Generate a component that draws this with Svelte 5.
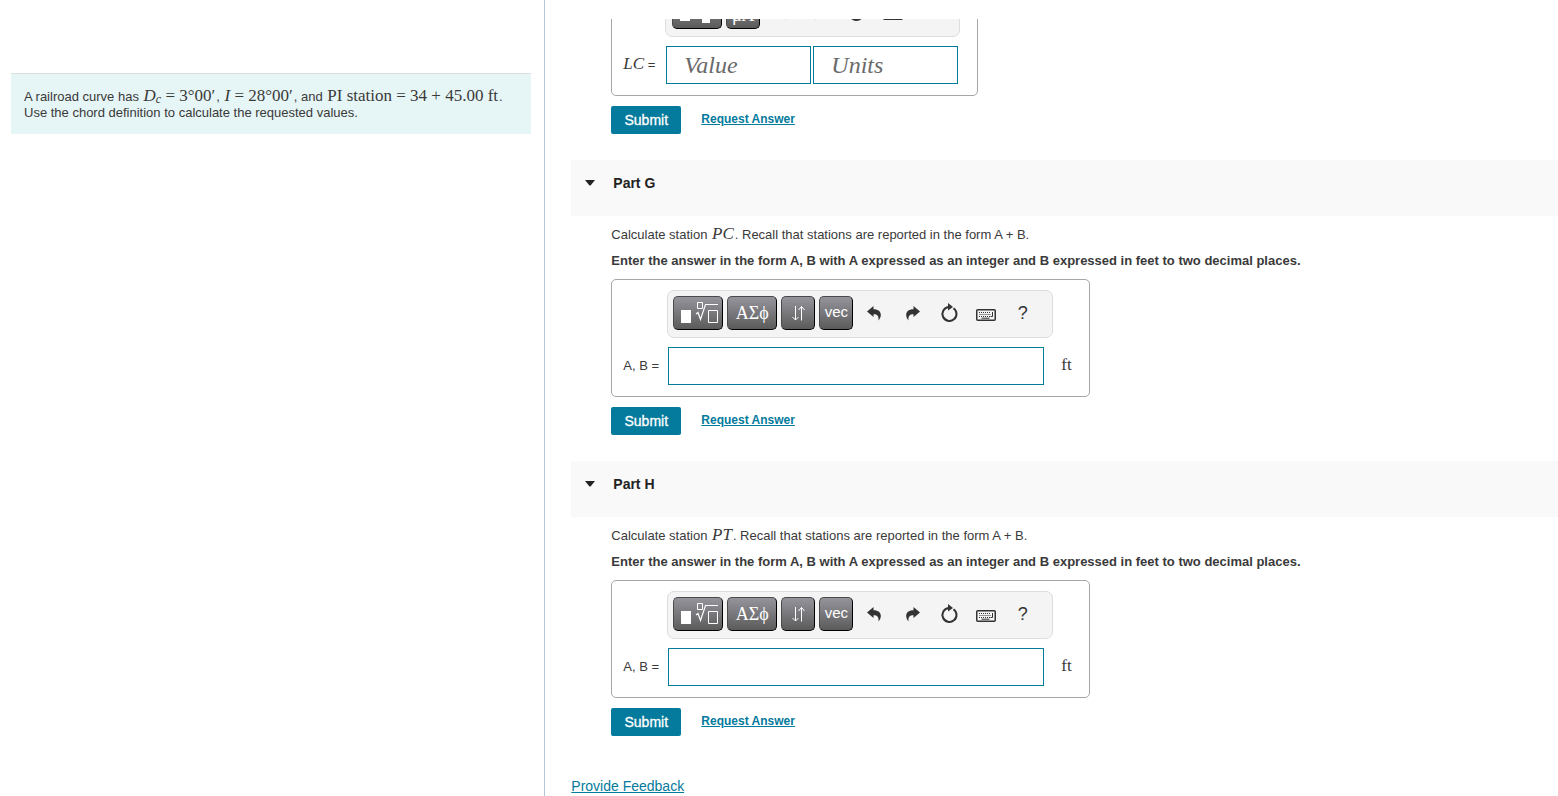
<script>
  const parts = [
    { letter: 'G', symbol: 'PC' },
    { letter: 'H', symbol: 'PT' }
  ];
</script>

{#snippet tools()}
  <div class="tools">
    <button class="tool" type="button" aria-label="undo">
      <svg width="16" height="18" viewBox="0 0 16 18"><path d="M0 7.500 6.500 2v3.200c5 0 7.300 2.300 7.300 5.800 0 2-1 4-2.300 5.500.5-4.500-1-6.300-5-6.300V13z" /></svg>
    </button>
    <button class="tool" type="button" aria-label="redo">
      <svg width="16" height="18" viewBox="0 0 16 18"><path d="M16 7.500 9.500 2v3.200C4.500 5.200 2.200 7.500 2.200 11c0 2 1 4 2.300 5.500-.5-4.500 1-6.300 5-6.300V13z" /></svg>
    </button>
    <button class="tool" type="button" aria-label="reset">
      <svg width="18" height="20" viewBox="0 0 18 20"><path class="line" d="M13.500 5.200A7 7 0 1 1 8.500 4" /><path d="M8 0l5 4-5 3.500z" /></svg>
    </button>
    <button class="tool" type="button" aria-label="keyboard shortcuts">
      <svg class="keys" width="20" height="12" viewBox="0 0 20 12"><rect class="frame" x=".75" y=".75" width="18.5" height="10.500" rx="1" /><path class="dots" d="M3 3.500h12M3.500 5.500h11M3 7.500h12" /><path class="bar" d="M5.500 9.200h8M16.500 3v4.500h-2" /></svg>
    </button>
    <button class="tool help" type="button" aria-label="help">?</button>
  </div>
{/snippet}

{#snippet actions()}
  <div class="actions">
    <button class="submit" type="button">Submit</button>
    <a class="request" href="#answer">Request Answer</a>
  </div>
{/snippet}

<div class="page">
  <aside>
    <div class="problem">
      A railroad curve has <span class="math"><i>D</i><sub>c</sub> = 3°00′</span>, <span class="math"><i>I</i> = 28°00′</span>, and <span class="math">PI station = 34 + 45.00 ft</span>.<br />
      Use the chord definition to calculate the requested values.
    </div>
  </aside>

  <main>
    <section class="body">
      <div class="window">
        <div class="card">
          <div class="toolbar indent">
            <button class="key wide" type="button" aria-label="templates">
              <svg width="32" height="24" viewBox="0 0 32 24"><path class="solid" d="M-1 8h10v13H-1zM21 12h8v11h-8zM21 2h8v7h-8z" /></svg>
            </button>
            <button class="key serif units" type="button">μÅ</button>
            {@render tools()}
          </div>
          <div class="entry">
            <label class="lc" for="value-f"><i>LC</i> =</label>
            <input id="value-f" class="half" placeholder="Value" />
            <input class="half" placeholder="Units" aria-label="Units" />
          </div>
        </div>
      </div>
      {@render actions()}
    </section>

    {#each parts as part}
      <section>
        <h2><svg width="10" height="6" viewBox="0 0 10 6"><path d="M0 0h10L5.500 5.600h-1z" /></svg>Part {part.letter}</h2>
        <div class="body">
          <p>Calculate station <i class="math">{part.symbol}</i>. Recall that stations are reported in the form A + B.</p>
          <p class="strong">Enter the answer in the form A, B with A expressed as an integer and B expressed in feet to two decimal places.</p>
          <div class="card">
            <div class="toolbar">
              <button class="key wide" type="button" aria-label="templates">
                <svg width="40" height="26" viewBox="0 0 40 26"><path class="solid" d="M3 10h10v13H3z" /><path class="thin" d="M19.500 2.500h5v6h-5zM30.500 10.500h9v12h-9z" /><path class="root" d="M18 14l2-1.500 2.500 7L27.500 4.500H40" /></svg>
              </button>
              <button class="key wide serif" type="button">ΑΣϕ</button>
              <button class="key" type="button" aria-label="subscript and superscript">
                <svg width="18" height="18" viewBox="0 0 18 18"><path class="thin" d="M6.500 2v14M3.500 13l3 3 3-3M12.500 16.500V2.500M9.500 6l3-3.500 3 3.500" /></svg>
              </button>
              <button class="key vec" type="button">vec</button>
              {@render tools()}
            </div>
            <div class="entry">
              <label for="answer-{part.letter}">A, B =</label>
              <input id="answer-{part.letter}" class="full" />
              <span class="unit">ft</span>
            </div>
          </div>
          {@render actions()}
        </div>
      </section>
    {/each}
    <a class="feedback" href="#feedback">Provide Feedback</a>
  </main>
</div>

<style>
  :global(body) { margin: 0; background: #fff; }
  .page { display: grid; grid-template-columns: 35fr 65fr; height: 100vh; overflow: hidden; font: 13px/16px "Liberation Sans", Arial, sans-serif; color: #3a3a3a; }
  aside { border-right: 1px solid #b4c6d8; padding: 73px 13px 0 11px; }
  .problem { background: #e6f5f5; border-top: 1px solid #d9dfdf; padding: 14px 13px 13px; }
  .math { margin: 0 1px; font-family: "Liberation Serif", "Times New Roman", serif; font-size: 17px; line-height: 16px; }
  .math sub { font-size: 12px; font-style: italic; line-height: 0; vertical-align: -2px; }
  main { padding: 19px 0 0 26px; min-width: 0; }
  .body { padding-left: 40px; }
  .window { height: 77px; overflow: hidden; display: flex; flex-direction: column; justify-content: flex-end; align-items: flex-start; }
  .card { width: fit-content; box-sizing: border-box; border: 1px solid #a6a6a6; border-radius: 5px; padding: 10px 17px 11px 10px; }
  .toolbar { box-sizing: border-box; width: fit-content; display: flex; align-items: center; gap: 4px; margin: 0 18px 9px 45px; height: 48px; padding: 0 13px 2px 5px; border: 1px solid #ddd; border-radius: 7px; background: #f4f4f4; }
  .toolbar.indent { margin-left: 43px; margin-right: 0; padding-left: 6px; }
  .key { box-sizing: border-box; flex: none; width: 34px; height: 34px; padding: 0; display: flex; align-items: center; justify-content: center; border: 1px solid; border-color: #4a4a4a #000 #000 #4a4a4a; border-radius: 5px; background: linear-gradient(#95949c, #5b5b5b); color: #fff; }
  .wide { width: 50px; }
  .serif { font: 18px/20px "Liberation Serif", serif; }
  .units { padding-top: 6px; }
  .vec { font: 15px/18px "Liberation Sans", sans-serif; padding-bottom: 2px; }
  .key svg { flex: none; overflow: visible; }
  .solid { fill: #fff; }
  .thin, .root { fill: none; stroke: #fff; stroke-width: 1; }
  .root { stroke-width: 1.2; }
  .tools { display: flex; gap: 4px; margin-left: 1px; }
  .tool { flex: none; width: 33px; height: 34px; padding: 0; border: 0; background: none; display: flex; align-items: center; justify-content: center; color: #333; }
  .tool svg { fill: #333; }
  .tool .line { fill: none; stroke: #333; stroke-width: 2; }
  .tool .frame { fill: none; stroke: #333; stroke-width: 1.5; }
  .keys { margin-top: 4px; }
  .tool .dots { fill: none; stroke: #333; stroke-width: 1; stroke-dasharray: 1 1; }
  .tool .bar { fill: none; stroke: #333; stroke-width: 1; }
  .help { font: 18px/20px "Liberation Sans", sans-serif; }
  .entry { display: flex; align-items: center; }
  label { box-sizing: border-box; width: 46px; padding-left: 1px; white-space: nowrap; }
  .lc { width: 44px; padding-bottom: 2px; }
  .lc i { font: italic 17px/16px "Liberation Serif", serif; }
  input { box-sizing: border-box; height: 38px; border: 1px solid #047a9c; border-radius: 0; padding: 0 17px; background: #fff; font: 24px/30px "Liberation Serif", serif; }
  input::placeholder { font-style: italic; color: #6a6a6a; opacity: 1; }
  .full { width: 376px; }
  .half { width: 145px; }
  .half + .half { margin-left: 2px; }
  .unit { margin-left: 17px; padding-bottom: 2px; font: 17px/20px "Liberation Serif", serif; }
  .actions { display: flex; gap: 20px; margin-top: 10px; height: 28px; }
  .submit { width: 70px; height: 28px; padding: 0; border: 0; border-radius: 2px; background: #047a9c; color: #fff; font: 14px/28px "Liberation Sans", sans-serif; -webkit-text-stroke: .3px #fff; }
  a { color: #047a9c; text-decoration: underline; }
  .request { font-size: 12px; font-weight: bold; line-height: 26px; }
  h2 { box-sizing: border-box; display: flex; align-items: center; gap: 18px; margin: 26px 0 10px; height: 56px; padding: 0 14px 10px; background: #f9f9f9; font-size: 14px; line-height: 16px; color: #222; }
  h2 svg { fill: #222; }
  p { margin: 0 0 10px; }
  .strong { font-weight: bold; }
  .feedback { display: block; width: fit-content; margin-top: 42px; font-size: 14px; }
</style>
